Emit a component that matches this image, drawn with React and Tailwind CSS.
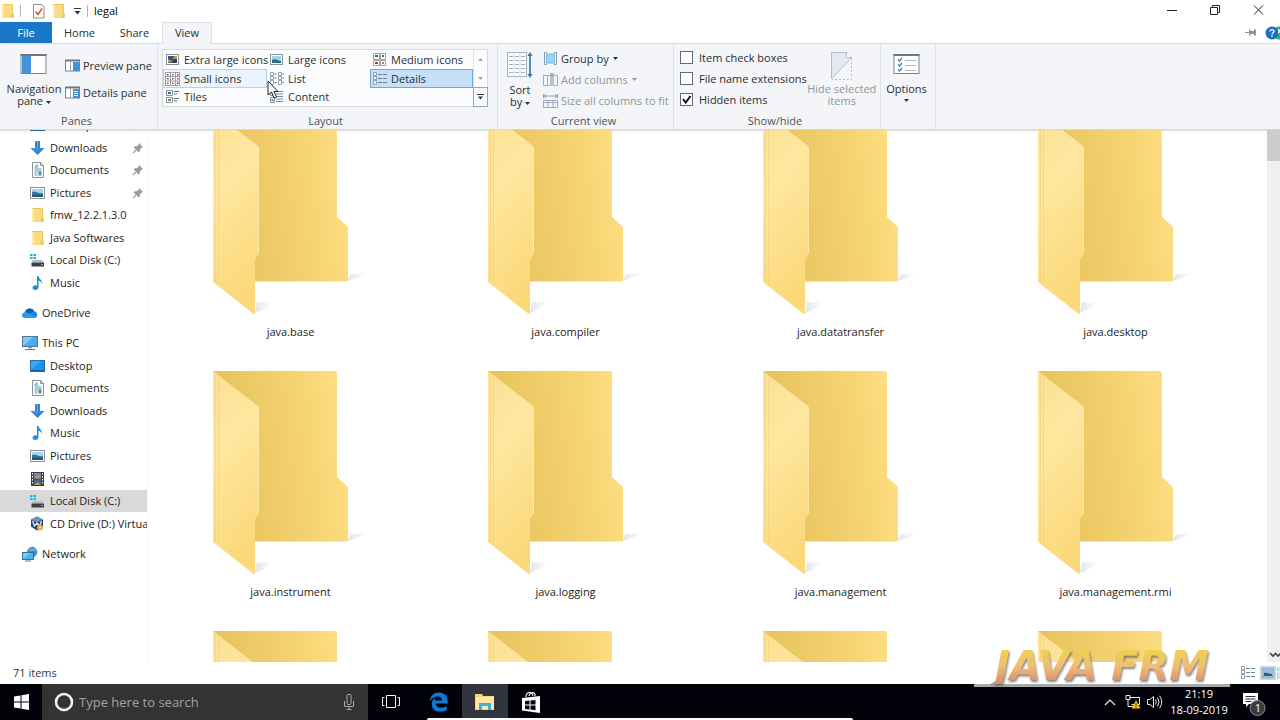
import React from "react";

/* ---------- small icons ---------- */

const Svg = ({ w = 16, h = 16, vb, className = "", children }) => (
  <svg width={w} height={h} viewBox={vb || `0 0 ${w} ${h}`} className={`shrink-0 ${className}`} fill="none" aria-hidden="true">
    {children}
  </svg>
);

const SmallFolder = () => (
  <Svg>
    <path d="M2 1h10.500v9l1.500 1.500V15H2z" fill="#f9dc80" />
    <path d="M2.500 1.500h10v8.500M11 11v3.500" stroke="#e6c563" strokeWidth="1" />
    <path d="M11.500 10.500l2-.5v5h-2z" fill="#edc85c" />
    <path d="M2 1l2 1.500V15H2z" fill="#ffe9a6" />
  </Svg>
);

const DownloadIcon = () => (
  <Svg>
    <path d="M5 1h5v7h4.500L7.500 15 .5 8H5z" fill="#2f87d6" />
    <path d="M5.500 1.500h2V9H3" stroke="#5aa8e8" />
  </Svg>
);

const DocumentIcon = () => (
  <Svg>
    <path d="M2.500.5h8l3 3v12h-11z" fill="#fff" stroke="#8b9197" />
    <path d="M10.500.5v3h3" stroke="#8b9197" />
    <path d="M4.500 5h4M4.500 7h7M4.500 9h7M4.500 11h3M4.500 13h3" stroke="#4b9fae" />
    <rect x="8.500" y="9.500" width="3" height="4" fill="#68869c" />
    <path d="M5 4.500L8 2.500" stroke="#39a2b8" />
  </Svg>
);

const PictureIcon = () => (
  <Svg>
    <rect x=".5" y="2.500" width="14" height="11" fill="#fff" stroke="#8b9197" />
    <rect x="2" y="4" width="11" height="8" fill="#a9d3f0" />
    <path d="M2 7c3-2 6 2 11 1v4H2z" fill="#3277a8" />
    <path d="M2 10c4-1 7 0 11 0v2H2z" fill="#285866" />
  </Svg>
);

const DiskIcon = () => (
  <Svg>
    <path d="M0 2h2.500v2H0zM3.500 2H6v2H3.500zM0 5h2.500v2H0zM3.500 5H6v2H3.500z" fill="#19b4dd" />
    <path d="M3 8h9l2 2.500H1.500z" fill="#b8bdc0" />
    <rect x="1.500" y="10.500" width="12.500" height="4" rx=".5" fill="#3b4146" />
    <rect x="11" y="12" width="2" height="1" fill="#5ddc63" />
  </Svg>
);

const MusicIcon = () => (
  <Svg>
    <path d="M7 1h1.500c.3 3 4 3.500 3.500 8-.8-2.500-2-3-3.500-3.300V12c0 1.800-1.500 3-3.200 3S2.500 14 2.500 12.800 4 10.300 5.500 10.300c.6 0 1 .1 1.500.3z" fill="#1e8fd8" />
  </Svg>
);

const CloudIcon = () => (
  <Svg>
    <path d="M3.500 13C1 13 0 11.500.2 10 .4 8.500 1.500 7.800 3 7.600 3.500 5 5.500 3.500 7.800 3.500c2 0 3.500 1 4.200 2.800 2 .2 3.200 1.600 3.200 3.400 0 2-1.300 3.300-3.200 3.300z" fill="#1f84d2" />
    <path d="M3 7.600c1.800-.4 3 0 4.500 1L14 12c-.6.700-1.200 1-2 1H3.500C1 13 0 11.500.2 10 .4 8.500 1.500 7.800 3 7.600z" fill="#2c9be8" />
    <path d="M3 7.600C3.500 5 5.500 3.500 7.800 3.500c2 0 3.500 1 4.200 2.800L7.500 8.600C6 7.600 4.800 7.200 3 7.600z" fill="#1160a8" />
  </Svg>
);

const PcIcon = () => (
  <Svg>
    <rect x=".5" y="1.500" width="15" height="10" fill="#45b0f5" stroke="#58748a" />
    <path d="M1 11L11 2H1z" fill="#7ccbfa" />
    <path d="M6 12h4v1.500H6z" fill="#9aa8b3" />
    <path d="M3 14.500h10" stroke="#5f7789" />
  </Svg>
);

const DesktopIcon = () => (
  <Svg>
    <rect x=".5" y="2.500" width="14" height="11" fill="#1a93f0" stroke="#2b6a9f" />
    <path d="M1 12L11 3H1z" fill="#38a8f8" />
    <path d="M1 12.500h13" stroke="#1464a4" />
  </Svg>
);

const VideoIcon = () => (
  <Svg>
    <rect x="1" y="1" width="13" height="14" fill="#3b3d42" />
    <rect x="4" y="2" width="7" height="5.500" fill="#6f86b8" />
    <rect x="4" y="8.500" width="7" height="5.500" fill="#4f6490" />
    <path d="M4 7.500L8 4l3 3.500zM4 14l4-3 3 3z" fill="#b99b4a" />
    <path d="M2.500 2v12M12.500 2v12" stroke="#fff" strokeDasharray="1.500 1.500" />
  </Svg>
);

const CdIcon = () => (
  <Svg>
    <path d="M7 .5l6 3v7l-6 4-6-4v-7z" fill="#26456f" />
    <path d="M7 .5l6 3-6 3-6-3z" fill="#7390b5" />
    <path d="M2.500 5l2 5L7 7l2.500 3 2-5" stroke="#e9eff6" strokeWidth="1.300" />
    <circle cx="10" cy="11.500" r="3" fill="#e0a93b" />
    <circle cx="10" cy="11.500" r="1" fill="#fff3cf" />
  </Svg>
);

const NetworkIcon = () => (
  <Svg>
    <path d="M9 1c3-1 6 2 6.500 5-.5 3-2.500 5-5 6L5 8c-.5-3 1-6 4-7z" fill="#3e94bd" />
    <path d="M7 3.500c3 1.500 5-1 7 1" stroke="#8fd0ea" />
    <rect x=".5" y="6.500" width="11" height="7" fill="#4bb4f2" stroke="#386f96" />
    <path d="M1 13L8 7H1z" fill="#7ccbfa" />
    <path d="M3 15h6" stroke="#5f7789" />
  </Svg>
);

const PinIcon = () => (
  <Svg w={12} h={12} className="ml-auto mr-0.5">
    <path d="M7 1l4 4-1.200.4-2 2 .1 2.100-1.100 1L1.700 5.400l1-1.200 2.200.1 1.900-2z" fill="#969da4" />
    <path d="M4 8L1 11" stroke="#969da4" strokeWidth="1.200" />
  </Svg>
);

/* ---------- ribbon icons ---------- */

const PaneIcon = ({ details }) => (
  <Svg w={16} h={14}>
    <rect x=".5" y="1.500" width="14" height="10.500" fill="#fff" stroke="#7a838c" />
    <path d="M0 1.500h15" stroke="#6f7983" strokeWidth="2" />
    <path d="M5.500 2v10" stroke="#a7afb7" />
    <rect x="8" y="3" width="6" height="9" fill="#4594d1" />
    {details && <path d="M9 5.500h4M9 7.500h4M9 9.500h4" stroke="#d9ecfa" />}
  </Svg>
);

const Arrow = ({ className = "" }) => (
  <Svg w={5} h={3} className={`inline-block ${className}`}>
    <path d="M0 0h5L2.500 3z" fill="currentColor" />
  </Svg>
);

const gallery = {
  extra: (
    <Svg>
      <rect x="1.500" y="2.500" width="12" height="10" fill="#fff" stroke="#8b9197" />
      <rect x="3" y="4" width="9" height="7" fill="#2c5a83" />
      <path d="M3 11V7l4 2 2-5h3v3z" fill="#b9a13a" />
      <path d="M8 7h4v4H8z" fill="#3f3468" />
    </Svg>
  ),
  large: (
    <Svg>
      <rect x="1.500" y="2.500" width="12" height="10" fill="#fff" stroke="#8b9197" />
      <rect x="3" y="4" width="9" height="7" fill="#a5d2ef" />
      <path d="M3 8c3-2 6 1 9 1v2H3z" fill="#2d6b83" />
    </Svg>
  ),
  medium: (
    <Svg>
      <path d="M1.500 1.500h6v6h-6zM8.500 1.500h5v6h-5zM1.500 8.500h6v5h-6zM8.500 8.500h5v5h-5z" fill="#fff" stroke="#9aa0a6" />
      <path d="M3 3h3v2H3z" fill="#3a5a7b" />
      <path d="M10 3h2v2h-2z" fill="#4d7a3e" />
      <path d="M3 10h3v2H3z" fill="#a33d2f" />
      <path d="M10 10h2v2h-2z" fill="#b08d35" />
    </Svg>
  ),
  small: (
    <Svg>
      <path d="M.5 1.500h14v13H.5zM5.500 1.500v13M10.500 1.500v13M.5 5.500h14M.5 10h14" fill="#fff" stroke="#9aa0a6" />
      <path d="M2 3h1.500v1.500H2zM7 7h1.500v1.500H7zM12 11.500h1.500V13H12z" fill="#3a4a5b" />
      <path d="M7 3h1.500v1.500H7zM12 7h1.500v1.500H12zM2 11.500h1.500V13H2z" fill="#b0413a" />
      <path d="M12 3h1.500v1.500H12zM2 7h1.500v1.500H2zM7 11.500h1.500V13H7z" fill="#b0413a" />
    </Svg>
  ),
  list: (
    <Svg>
      <path d="M1.500 1.500h3v3h-3zM1.500 5.500h3v3h-3zM1.500 9.500h3v4h-3zM9.500 1.500h3v3h-3zM9.500 5.500h3v3h-3zM9.500 9.500h3v4h-3z" fill="#fff" stroke="#9aa0a6" />
      <path d="M5.500 3h2M5.500 7h2M5.500 11.500h2M13.500 3H15M13.500 7H15M13.500 11.500H15" stroke="#646c74" />
    </Svg>
  ),
  details: (
    <Svg>
      <path d="M1.500 1.500h3v3h-3zM1.500 5.500h3v3h-3zM1.500 9.500h3v4h-3z" fill="#fff" stroke="#8f9fae" />
      <path d="M6 3.500h4M11 3.500h4M6 7.500h4M11 7.500h4M6 11.500h4M11 11.500h4" stroke="#6d8296" />
    </Svg>
  ),
  tiles: (
    <Svg>
      <path d="M1.500 1.500h6v5h-6zM1.500 8.500h6v5h-6z" fill="#fff" stroke="#8b9197" />
      <path d="M3 3h3v2H3z" fill="#2d6ea3" />
      <path d="M3 10h3v2H3z" fill="#7d8a34" />
      <path d="M9 2.500h5M9 5h3M9 9.500h5M9 12h3" stroke="#646c74" />
    </Svg>
  ),
  content: (
    <Svg>
      <path d="M1.500 1.500h4v5h-4zM1.500 8.500h4v5h-4z" fill="#fff" stroke="#8b9197" />
      <path d="M7 2.500h7M7 5h7M7 7.500h7M7 10h7M7 12.500h7" stroke="#6f8ba8" />
      <path d="M2.500 10.500h2v1.500h-2z" fill="#40566b" />
    </Svg>
  ),
};

const galleryItems = [
  ["extra", "Extra large icons"],
  ["large", "Large icons"],
  ["medium", "Medium icons"],
  ["small", "Small icons"],
  ["list", "List"],
  ["details", "Details"],
  ["tiles", "Tiles"],
  ["content", "Content"],
];

const galleryState = {
  small: "border-[#b5d3ea] bg-[#ebf4fc]",
  details: "border-[#72a9d3] bg-[#c7e0f9]",
};

/* ---------- large folder ---------- */

const FolderDefs = () => (
  <svg width="0" height="0" className="absolute" aria-hidden="true">
    <defs>
      <linearGradient id="back" x1="0" y1=".3" x2="1" y2=".15">
        <stop offset="0" stopColor="#e8c25a" />
        <stop offset=".35" stopColor="#eecb67" />
        <stop offset=".7" stopColor="#f6d573" />
        <stop offset="1" stopColor="#ffe085" />
      </linearGradient>
      <linearGradient id="flap" x1="0" y1="0" x2=".25" y2="1">
        <stop offset="0" stopColor="#fbe095" />
        <stop offset=".4" stopColor="#ffe7a0" />
        <stop offset="1" stopColor="#fbd97a" />
      </linearGradient>
      <linearGradient id="shade" x1="0" y1="0" x2="1" y2="0">
        <stop offset="0" stopColor="#9aa0a8" stopOpacity=".28" />
        <stop offset="1" stopColor="#9aa0a8" stopOpacity="0" />
      </linearGradient>
    </defs>
  </svg>
);

const LargeFolder = () => (
  <Svg w={156} h={204}>
    <path d="M134 170l4-7c8 0 14-1 17-3-6 6-13 8-21 10z" fill="url(#shade)" />
    <path d="M42 202l2-11c7 1 11 0 16-2-4 7-10 10-18 13z" fill="url(#shade)" />
    <path d="M0 0h122q2 0 2 2v104l10 9q1 1 1 2v52q0 1.500-1.500 1.500H30z" fill="url(#back)" />
    <path d="M0 0l45 35q1 1 1 2v105q0 1-1 2l-2 3q-1 1-1 2v52q0 3-2 1.500L0 171z" fill="url(#flap)" />
    <path d="M2.500 3v169M5.500 6v169" stroke="#f2cf77" strokeOpacity=".6" />
    <path d="M45.500 37v105" stroke="#ffe9a8" />
  </Svg>
);

/* ---------- data ---------- */

const folders = [
  "java.base", "java.compiler", "java.datatransfer", "java.desktop",
  "java.instrument", "java.logging", "java.management", "java.management.rmi",
  "", "", "", "",
];

const quick = [
  ["Desktop", DesktopIcon, true],
  ["Downloads", DownloadIcon, true],
  ["Documents", DocumentIcon, true],
  ["Pictures", PictureIcon, true],
  ["fmw_12.2.1.3.0", SmallFolder],
  ["Java Softwares", SmallFolder],
  ["Local Disk (C:)", DiskIcon],
  ["Music", MusicIcon],
];

const thisPc = [
  ["Desktop", DesktopIcon],
  ["Documents", DocumentIcon],
  ["Downloads", DownloadIcon],
  ["Music", MusicIcon],
  ["Pictures", PictureIcon],
  ["Videos", VideoIcon],
  ["Local Disk (C:)", DiskIcon],
  ["CD Drive (D:) Virtua", CdIcon],
];

const NavItem = ({ label, icon: Icon, pinned, root, selected }) => (
  <a
    href="#"
    className={`flex min-h-[22px] items-center gap-1 whitespace-nowrap ${root ? "pl-[22px]" : "pl-[30px]"} ${selected ? "bg-[#d9d9d9]" : ""}`}
  >
    <Icon />
    {label}
    {pinned && <PinIcon />}
  </a>
);

const Group = ({ label, className = "", children }) => (
  <section className={`flex flex-col border-r border-[#e0e3e8] ${className}`}>
    <div className="flex h-[69px] items-start pt-[5px]">{children}</div>
    <h2 className="h-4 pr-1 text-center leading-4 text-[#4c5258]">{label}</h2>
  </section>
);

const Check = ({ label, checked }) => (
  <label className="flex h-[21px] items-center gap-1.5 whitespace-nowrap">
    <span className="relative flex">
      <input type="checkbox" defaultChecked={checked} className="peer h-[13px] w-[13px] appearance-none border border-[#5f6a75] bg-white" />
      <Svg w={13} h={13} className="pointer-events-none absolute left-0 top-0 hidden peer-checked:block">
        <path d="M3 6l2.700 3.500L10.500 3" stroke="#111" strokeWidth="2" />
      </Svg>
    </span>
    {label}
  </label>
);

const TaskButton = ({ label, active, children }) => (
  <button aria-label={label} className={`flex w-[46px] items-center justify-center ${active ? "bg-[#33353e]" : ""}`}>
    {children}
  </button>
);

/* ---------- page ---------- */

export default function App() {
  return (
    <div className="relative flex h-screen flex-col overflow-hidden bg-white font-['Open_Sans','Noto_Sans',sans-serif] text-[11px] leading-3 text-[#2b2f33]">
      <FolderDefs />

      <header className="flex h-[22px] shrink-0 items-center">
        <SmallFolder />
        <span className="ml-1 h-3 w-px bg-[#b5b5b5]" />
        <button aria-label="Properties" className="ml-2.5">
          <Svg>
            <path d="M2.500 1.500h8l2.500 2.500v11H2.500z" fill="#fff" stroke="#8a8a8a" />
            <path d="M4.500 8.500l2.500 3 4-6" stroke="#d4573a" strokeWidth="1.600" />
          </Svg>
        </button>
        <button aria-label="New folder" className="ml-1"><SmallFolder /></button>
        <button aria-label="Customize toolbar" className="ml-1.5 flex w-2 justify-center">
          <Svg w={7} h={7}><path d="M0 .5h7" stroke="#333" /><path d="M.5 3h6l-3 3.500z" fill="#333" /></Svg>
        </button>
        <span className="ml-1.5 h-3 w-px bg-[#b5b5b5]" />
        <h1 className="ml-1.5 text-black">legal</h1>
        <div className="ml-auto flex">
          <button aria-label="Minimize" className="flex w-[43px] justify-center">
            <Svg w={11} h={12}><path d="M0 5.500h10" stroke="#222" /></Svg>
          </button>
          <button aria-label="Restore" className="flex w-[43px] justify-center">
            <Svg w={11} h={12}><path d="M.5 2.500h7v7h-7zM2.500 2V.5h7v7H8" stroke="#222" /></Svg>
          </button>
          <button aria-label="Close" className="flex w-[43px] justify-center">
            <Svg w={11} h={12}><path d="M1 .5l9 9M10 .5l-9 9" stroke="#222" /></Svg>
          </button>
        </div>
      </header>

      <nav className="flex h-[22px] shrink-0 border-b border-[#dde0e5]">
        <button className="w-[52px] bg-[#1a77c8] text-white">File</button>
        <button className="w-[55px]">Home</button>
        <button className="w-[55px]">Share</button>
        <button className="-mb-px w-[50px] border border-b-0 border-[#dde0e5] bg-[#f3f5f8] pb-0.5">View</button>
        <div className="ml-auto flex items-center gap-2 overflow-hidden">
          <Svg w={12} h={9}>
            <path d="M0 4.500h4" stroke="#8f959b" />
            <path d="M4 1.500h1.500V3H9V1.500h2v6H9V6H5.500v1.500H4z" fill="#8f959b" />
          </Svg>
          <button aria-label="Help" className="flex">
            <Svg w={15} h={14}>
              <circle cx="14" cy="7" r="6.500" fill="#22b573" />
              <circle cx="7" cy="7" r="6.500" fill="#1b6ec2" />
              <path d="M5 5.500C5 3 9 3 9 5.200 9 6.700 7 6.700 7 8.500M7 9.500V11M13 4c2 0 2 2 0 3" stroke="#fff" strokeWidth="1.400" />
            </Svg>
          </button>
        </div>
      </nav>

      <div className="flex h-[86px] shrink-0 border-b border-[#d3d7dc] bg-[#f3f5f8] shadow-sm">
        <Group label="Panes" className="w-[158px]">
          <button className="ml-1 flex w-[60px] flex-col items-center pt-1">
            <Svg w={28} h={22}>
              <rect x="1" y="1.500" width="25" height="19" fill="#fff" stroke="#7a838c" />
              <path d="M.5 2h26" stroke="#6f7983" strokeWidth="2" />
              <rect x="2" y="3" width="9" height="17" fill="#4594d9" />
            </Svg>
            <span className="mt-2">Navigation<br />pane <Arrow className="align-middle" /></span>
          </button>
          <div className="flex flex-col pt-[3px]">
            <button className="flex h-[27px] items-center gap-0.5 whitespace-nowrap pl-px"><PaneIcon />Preview pane</button>
            <button className="flex h-[27px] items-center gap-0.5 whitespace-nowrap pl-px"><PaneIcon details />Details pane</button>
          </div>
        </Group>

        <Group label="Layout" className="w-[340px]">
          <div className="ml-1 flex h-[58px] border border-[#d5dae0] bg-[#fbfcfd]">
            <div className="grid grid-cols-[104px_103px_103px] grid-rows-[19px_19px_18px]">
              {galleryItems.map(([key, label]) => (
                <button key={key} className={`flex items-center gap-[3px] whitespace-nowrap border pl-px ${galleryState[key] || "border-transparent"}`}>
                  {gallery[key]}
                  {label}
                </button>
              ))}
            </div>
            <div className="flex w-[14px] flex-col border-l border-[#dfe3e8] text-[#a3a8ad]">
              <button aria-label="Scroll up" className="flex h-[19px] items-center justify-center"><Arrow className="rotate-180" /></button>
              <button aria-label="Scroll down" className="flex h-[18px] items-center justify-center"><Arrow /></button>
              <button aria-label="More layouts" className="-mb-px -ml-px -mr-px flex h-5 items-center justify-center border border-[#8fabc8] bg-[#f6f9fc]">
                <Svg w={7} h={6}><path d="M0 .5h7" stroke="#333" /><path d="M1 2.500h5L3.500 5.500z" fill="#333" /></Svg>
              </button>
            </div>
          </div>
        </Group>

        <Group label="Current view" className="w-[176px]">
          <button className="ml-1 flex w-9 flex-col items-center pt-[3px]">
            <Svg w={26} h={28}>
              <rect x=".5" y=".5" width="19" height="24" fill="#fff" stroke="#a7b2bc" />
              <path d="M2 4.500h16M2 8.500h16M2 12.500h16M2 16.500h16M2 20.500h16" stroke="#9fb1c0" strokeDasharray="4 2" />
              <path d="M7 1v23M13 1v23" stroke="#cfd8df" />
              <path d="M23 2v22" stroke="#2a78b4" strokeWidth="1.600" />
              <path d="M20.500 4L23 0l2.500 4zM20.500 22l2.500 4 2.500-4z" fill="#2a78b4" />
            </Svg>
            <span className="mt-1">Sort<br />by <Arrow className="align-middle" /></span>
          </button>
          <div className="-mt-px flex flex-col pl-[5px]">
            <button className="flex h-[21px] items-center gap-0.5 whitespace-nowrap">
              <Svg><path d="M4 1.500H1.500v12H4M11 1.500h2.500v12H11" stroke="#8b9dab" /><rect x="3.500" y="3" width="8" height="9" fill="#9fd2f5" stroke="#7bb6de" /></Svg>
              Group by <Arrow className="ml-0.5" />
            </button>
            <button disabled className="flex h-[21px] items-center gap-0.5 whitespace-nowrap text-[#8f959c]">
              <Svg><path d="M.5 3.500h4v10h-4zM4.500 3.500h4v10h-4zM10.500 3.500h4v10h-4z" fill="#f2f5f8" stroke="#9eabb8" /><path d="M7 1h4v13H7z" fill="#b4c3d2" /><path d="M9 2v3" stroke="#71879c" /></Svg>
              Add columns <Arrow className="ml-0.5" />
            </button>
            <button disabled className="flex h-[21px] items-center gap-0.5 whitespace-nowrap text-[#8f959c]">
              <Svg><path d="M.5 1v4M14.500 1v4M1 3h13M3 1L1 3l2 2M12 1l2 2-2 2" stroke="#8fa0b0" /><path d="M.5 7.500h14v7H.5zM.5 9.500h14M5 7.500v7M10 7.500v7" stroke="#a5a6c6" /></Svg>
              Size all columns to fit
            </button>
          </div>
        </Group>

        <Group label="Show/hide" className="w-[207px]">
          <div className="-mt-0.5 flex flex-col pl-1.5">
            <Check label="Item check boxes" />
            <Check label="File name extensions" />
            <Check label="Hidden items" checked />
          </div>
          <button disabled className="flex w-[70px] flex-col items-center pt-0.5 text-[#8f959c]">
            <Svg w={22} h={30}>
              <path d="M.5 28V1.500h15l5 5L.5 28z" fill="#e4e8f2" stroke="#b4bccb" />
              <path d="M15.500 1.500v5h5" fill="#fff" stroke="#b4bccb" />
              <path d="M20.500 7v21.500H1" stroke="#b4bccb" strokeDasharray="2 2" />
            </Svg>
            <span className="mt-0.5 whitespace-nowrap">Hide selected<br />items</span>
          </button>
        </Group>

        <Group label="" className="w-[55px]">
          <button className="flex w-[51px] flex-col items-center pt-1">
            <Svg w={28} h={22}>
              <rect x="1" y="1.500" width="25" height="19" fill="#fff" stroke="#7a838c" />
              <path d="M.5 2h26" stroke="#6f7983" strokeWidth="2" />
              <path d="M5 6.500l1.500 1.500L9 5M5 11.500L6.500 13 9 10M5 16.500L6.500 18 9 15" stroke="#2f80c0" strokeWidth="1.200" />
              <path d="M12 7.500h11M12 12.500h11M12 17.500h11" stroke="#b3bac0" />
            </Svg>
            <span className="mt-2">Options</span>
            <Arrow className="mt-1" />
          </button>
        </Group>
      </div>

      <main className="flex min-h-0 flex-1 overflow-hidden">
        <aside className="w-[148px] shrink-0 overflow-hidden border-r border-[#f7f7f7] pr-px text-[#1c1c1c]">
          <div className="-mt-4 grid h-[180px] auto-rows-fr">
            {quick.map(([label, icon, pinned]) => (
              <NavItem key={label} label={label} icon={icon} pinned={pinned} />
            ))}
          </div>
          <div className="py-2"><NavItem label="OneDrive" icon={CloudIcon} root /></div>
          <div className="grid h-[203px] auto-rows-fr">
            <NavItem label="This PC" icon={PcIcon} root />
            {thisPc.map(([label, icon]) => (
              <NavItem key={label} label={label} icon={icon} selected={icon === DiskIcon} />
            ))}
          </div>
          <div className="py-2"><NavItem label="Network" icon={NetworkIcon} root /></div>
        </aside>

        <div className="min-w-0 flex-1 overflow-hidden pl-[5px] pr-3.5">
          <ul className="-mt-[19px] grid grid-cols-4">
            {folders.map((name, i) => (
              <li key={i} className="flex h-[260px] flex-col items-center">
                <LargeFolder />
                <span className="mt-2 leading-[18px] text-[#1c1c1c]">{name}</span>
              </li>
            ))}
          </ul>
        </div>

        <div className="flex w-[13px] shrink-0 flex-col justify-between overflow-hidden bg-[#f0f0f0]">
          <div className="h-[31px] bg-[#cdcdcd]" />
          <Svg w={13} h={16}>
            <path d="M3 7l3 3 3-3" stroke="#444" strokeWidth="1.600" />
            <path d="M8 7l3 3 3-3" stroke="#444" strokeWidth="1.600" />
          </Svg>
        </div>
      </main>

      <footer className="flex h-[22px] shrink-0 items-center bg-white pl-[13px] text-[#283a55]">
        71 items
        <div className="ml-auto flex items-center gap-1">
          <button aria-label="Details view">{gallery.details}</button>
          <button aria-label="Large icons view" className="flex">
            <Svg w={20} h={14}>
              <rect x="1" y="1" width="14" height="12" fill="#d9f0fa" stroke="#7fb4d0" />
              <rect x="3" y="3" width="10" height="8" fill="#fff" stroke="#6d7780" />
              <path d="M4 4h8v6H4z" fill="#8fc6ea" />
              <path d="M4 7c3-1 5 1 8 1v2H4z" fill="#22618c" />
              <path d="M17.500 1v4M17.500 7v6M19 1v12" stroke="#7fe0c4" />
            </Svg>
          </button>
        </div>
      </footer>

      <div className="flex h-9 shrink-0 bg-[#02030a] text-white">
        <button aria-label="Start" className="flex w-[42px] items-center justify-center pl-0.5">
          <Svg w={16} h={16}><path d="M0 2.500l6.500-1v6H0zM7.500 1.300L15 0v7.500H7.500zM0 8.500h6.500v6l-6.500-1zM7.500 8.500H15V16l-7.500-1.300z" fill="#fff" /></Svg>
        </button>
        <div className="flex w-[326px] items-center bg-[#333333] pl-3">
          <Svg w={20} h={20}><circle cx="10" cy="10" r="8" stroke="#f2f2f2" strokeWidth="2.600" /></Svg>
          <input aria-label="Search" placeholder="Type here to search" className="ml-[5px] min-w-0 flex-1 bg-transparent text-[13px] text-white outline-none placeholder:text-[#a3a3a3]" />
          <button aria-label="Voice search" className="mr-3">
            <Svg w={14} h={18}><rect x="5" y="1.500" width="4" height="10" rx="1" stroke="#a8a8a8" /><path d="M2.500 8v5.500h9V8M7 13.500V17M4.500 16.500h5" stroke="#a8a8a8" /></Svg>
          </button>
        </div>
        <TaskButton label="Task view">
          <Svg w={18} h={14}><path d="M4.500.5h9v12h-9zM2.500 2.500h-2v8h2M15.500 2.500h2v8h-2" stroke="#f2f2f2" /></Svg>
        </TaskButton>
        <div className="ml-0.5 flex">
          <TaskButton label="Edge">
            <Svg w={20} h={20}>
              <path d="M.8 9.200C1.600 3.800 5 .5 10 .5c5.600 0 8.700 4 8.700 8.600v2.300H6.700c.2 3 2.600 4.300 5.400 4.300 2.100 0 4-.6 5.600-1.600v4c-1.800 1-4 1.500-6.600 1.500-5 0-8.300-2.900-8.300-7.400 0-2.900 1.500-5.300 4-6.700-.6.800-1 1.800-1.100 2.900h7.200c0-2.400-1.300-3.900-3.800-3.900-3.400 0-6.200 1.800-8.300 4.700z" fill="#0a7bdb" />
            </Svg>
          </TaskButton>
          <TaskButton label="File Explorer" active>
            <Svg w={20} h={18}>
              <path d="M0 1h7l1 2h11v14H0z" fill="#f6d775" />
              <path d="M1 4h18v12H1z" fill="#ffe9a2" />
              <path d="M4 10h12v7h-3v-4H7v4H4z" fill="#3fb0d8" />
            </Svg>
          </TaskButton>
          <TaskButton label="Store">
            <Svg w={20} h={22}>
              <path d="M5 6c0-5 6-7 7-1M8 5c1-5 7-4 6 0" stroke="#eee" strokeWidth="1.200" />
              <path d="M1 7l18-2v17L1 19.500z" fill="#fff" />
              <path d="M4 10l4.500-.5v4H4zM9.500 9.400l5-.5v4.600h-5zM4 14.500h4.500v4L4 18zM9.500 14.500h5v4.700l-5-.6z" fill="#05060d" />
            </Svg>
          </TaskButton>
        </div>

        <div className="ml-auto flex items-center">
          <button aria-label="Show hidden icons" className="flex w-6 justify-center">
            <Svg w={12} h={8}><path d="M1 7l5-5 5 5" stroke="#e8e8e8" strokeWidth="1.200" /></Svg>
          </button>
          <button aria-label="Network status" className="flex w-[22px] justify-center">
            <Svg w={16} h={16}>
              <path d="M4.500 3.500h10v7h-8M3 6v6.500h5M1 1.500h4v4H1z" stroke="#f0f0f0" />
              <path d="M11 6l4.500 8.500h-9z" fill="#f6bd16" />
              <path d="M11 9v3M11 12.800v1" stroke="#4b3a00" />
            </Svg>
          </button>
          <button aria-label="Volume" className="flex w-[22px] justify-center">
            <Svg w={16} h={14}><path d="M.5 4.500h2.500l3.500-3v11L3 9.500H.5zM8.500 4.500q1.500 2.500 0 5M10.500 2.500q3 4.500 0 9M12.500.8q4.500 6.200 0 12.400" stroke="#e8e8e8" /></Svg>
          </button>
          <time className="w-[66px] text-center leading-4">21:19<br />18-09-2019</time>
          <button aria-label="Notifications" className="relative ml-2 mr-3.5 flex pt-1">
            <Svg w={26} h={26}>
              <path d="M3 2h15v11H9l-3 3v-3H3z" fill="#fff" />
              <path d="M5.500 5.500h10M5.500 8h10M5.500 10.500h6" stroke="#2a2c33" />
              <circle cx="17.500" cy="17" r="7.500" fill="#3a3c42" stroke="#8b8d92" />
            </Svg>
            <span className="absolute bottom-[3px] right-[5px]">1</span>
          </button>
        </div>
      </div>

      {/* Mouse pointer */}
      <Svg w={14} h={20} className="absolute left-[267px] top-[80px]">
        <path d="M1 1v14l3.500-3L7 18l2.500-1-2.500-5.500H11z" fill="#fff" stroke="#222" />
      </Svg>

      {/* Channel watermark */}
      <div className="absolute bottom-[33px] right-[50px] flex w-[256px] flex-col items-center">
        <span className="whitespace-nowrap bg-gradient-to-b from-[#efd24a] via-[#eebf72] to-[#d98a6c] bg-clip-text px-1 font-['DejaVu_Sans',sans-serif] text-[40px] font-bold italic leading-9 text-transparent drop-shadow-[1px_2px_1px_rgba(90,80,80,0.7)]">
          JAVA FRM
        </span>
        <span className="h-[3px] w-full bg-[#a6a8ac]" />
      </div>

      {/* Player edge */}
      <div className="absolute bottom-0 left-1/3 h-0.5 w-1/3 rounded-t bg-white" />
    </div>
  );
}
